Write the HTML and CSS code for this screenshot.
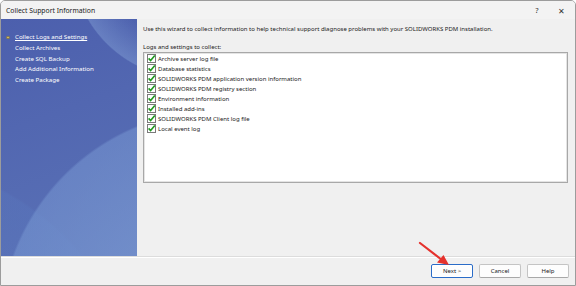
FILE: index.html
```html
<!DOCTYPE html>
<html>
<head>
<meta charset="utf-8">
<link rel="stylesheet" href="styles.css">
</head>
<body>
<div class="window">
  <div class="titlebar">
    <span class="title">Collect Support Information</span>
    <div class="title-buttons">
      <span class="tb-btn">?</span>
      <span class="tb-btn close">✕</span>
    </div>
  </div>
  <div class="main">
    <div class="sidebar">
      <ul class="steps">
        <li class="step current"><span class="bullet"></span><span class="step-text">Collect Logs and Settings</span></li>
        <li class="step"><span class="step-text">Collect Archives</span></li>
        <li class="step"><span class="step-text">Create SQL Backup</span></li>
        <li class="step"><span class="step-text">Add Additional Information</span></li>
        <li class="step"><span class="step-text">Create Package</span></li>
      </ul>
    </div>
    <div class="content">
      <p class="intro">Use this wizard to collect information to help technical support diagnose problems with your SOLIDWORKS PDM installation.</p>
      <p class="label">Logs and settings to collect:</p>
      <div class="listbox">
        <div class="item"><svg class="cb" viewBox="0 0 9 9"><rect x="0.5" y="0.5" width="8" height="8" fill="#fff" stroke="#7a7a7a"/><path d="M1.6 4.4 L3.6 6.6 L7.8 1.6" fill="none" stroke="#1e9a1e" stroke-width="1.6"/></svg><span>Archive server log file</span></div>
        <div class="item"><svg class="cb" viewBox="0 0 9 9"><rect x="0.5" y="0.5" width="8" height="8" fill="#fff" stroke="#7a7a7a"/><path d="M1.6 4.4 L3.6 6.6 L7.8 1.6" fill="none" stroke="#1e9a1e" stroke-width="1.6"/></svg><span>Database statistics</span></div>
        <div class="item"><svg class="cb" viewBox="0 0 9 9"><rect x="0.5" y="0.5" width="8" height="8" fill="#fff" stroke="#7a7a7a"/><path d="M1.6 4.4 L3.6 6.6 L7.8 1.6" fill="none" stroke="#1e9a1e" stroke-width="1.6"/></svg><span>SOLIDWORKS PDM application version information</span></div>
        <div class="item"><svg class="cb" viewBox="0 0 9 9"><rect x="0.5" y="0.5" width="8" height="8" fill="#fff" stroke="#7a7a7a"/><path d="M1.6 4.4 L3.6 6.6 L7.8 1.6" fill="none" stroke="#1e9a1e" stroke-width="1.6"/></svg><span>SOLIDWORKS PDM registry section</span></div>
        <div class="item"><svg class="cb" viewBox="0 0 9 9"><rect x="0.5" y="0.5" width="8" height="8" fill="#fff" stroke="#7a7a7a"/><path d="M1.6 4.4 L3.6 6.6 L7.8 1.6" fill="none" stroke="#1e9a1e" stroke-width="1.6"/></svg><span>Environment information</span></div>
        <div class="item"><svg class="cb" viewBox="0 0 9 9"><rect x="0.5" y="0.5" width="8" height="8" fill="#fff" stroke="#7a7a7a"/><path d="M1.6 4.4 L3.6 6.6 L7.8 1.6" fill="none" stroke="#1e9a1e" stroke-width="1.6"/></svg><span>Installed add-ins</span></div>
        <div class="item"><svg class="cb" viewBox="0 0 9 9"><rect x="0.5" y="0.5" width="8" height="8" fill="#fff" stroke="#7a7a7a"/><path d="M1.6 4.4 L3.6 6.6 L7.8 1.6" fill="none" stroke="#1e9a1e" stroke-width="1.6"/></svg><span>SOLIDWORKS PDM Client log file</span></div>
        <div class="item"><svg class="cb" viewBox="0 0 9 9"><rect x="0.5" y="0.5" width="8" height="8" fill="#fff" stroke="#7a7a7a"/><path d="M1.6 4.4 L3.6 6.6 L7.8 1.6" fill="none" stroke="#1e9a1e" stroke-width="1.6"/></svg><span>Local event log</span></div>
      </div>
    </div>
  </div>
  <div class="footer">
    <button class="btn default">Next &gt;</button>
    <button class="btn">Cancel</button>
    <button class="btn">Help</button>
  </div>
  <svg class="arrow" viewBox="0 0 40 30" width="40" height="30">
    <line x1="2" y1="2" x2="24" y2="19" stroke="#e5322d" stroke-width="2.2" stroke-linecap="round"/>
    <polygon points="31,24 19,21.5 25.5,14" fill="#e5322d"/>
  </svg>
</div>
</body>
</html>
```

FILE: styles.css
```css
* { box-sizing: border-box; }
html, body { margin: 0; padding: 0; }
body {
  width: 576px;
  height: 286px;
  background: #fff;
  font-family: "Noto Sans", "Open Sans", sans-serif;
  color: #1a1a1a;
  overflow: hidden;
}
.window {
  position: relative;
  width: 576px;
  height: 286px;
  border: 1px solid #9c9c9c;
  border-radius: 5px 5px 0 0;
  background: #f0f0f0;
  display: flex;
  flex-direction: column;
  overflow: hidden;
}
.titlebar {
  height: 18px;
  flex: 0 0 18px;
  display: flex;
  align-items: center;
  justify-content: space-between;
  padding: 0 0 0 5px;
  background: #f3f3f3;
}
.title {
  font-size: 6.8px;
  color: #1a1a1a;
}
.title-buttons {
  display: flex;
  align-items: center;
  height: 100%;
}
.tb-btn {
  width: 24px;
  text-align: center;
  font-size: 7.5px;
  color: #333;
}
.tb-btn.close { font-size: 8px; margin-right: 2px; }
.main {
  flex: 0 0 237px;
  display: flex;
}
.sidebar {
  width: 136px;
  flex: 0 0 136px;
  background:
    radial-gradient(circle 222px at 220px 312px, rgba(140,172,222,0.6) 0, rgba(122,154,212,0.5) 99%, transparent 100%),
    radial-gradient(circle 120px at 190px -60px, rgba(140,170,220,0) 0, rgba(140,170,220,0) 70%, rgba(140,170,220,0.4) 99%, transparent 100%),
    radial-gradient(circle 260px at -120px 400px, rgba(90,120,190,0) 0, rgba(90,120,190,0.35) 99%, transparent 100%),
    linear-gradient(160deg, #4c5fad 0%, #5267b1 40%, #5a72b6 100%);
  padding-top: 13px;
}
.steps {
  list-style: none;
  margin: 0;
  padding: 0;
}
.step {
  position: relative;
  height: 10.75px;
  line-height: 10.75px;
  padding-left: 14px;
  font-size: 6.15px;
  color: #ffffff;
}
.step.current .step-text { text-decoration: underline; }
.bullet {
  position: absolute;
  left: 5px;
  top: 3.6px;
  width: 3.6px;
  height: 3.6px;
  border-radius: 50%;
  background: #c8b46a;
  border: 0.6px solid #8e7d3a;
}
.content {
  flex: 1;
  padding: 6px 7px 0 6px;
  font-size: 6px;
}
.intro {
  margin: 0;
  line-height: 9px;
}
.label {
  margin: 9px 0 0 0;
  line-height: 9px;
}
.listbox {
  margin-top: 0;
  height: 131px;
  background: #fff;
  border: 1px solid #a8a8a8;
  box-shadow: inset 0 0 0 1px #e4e4e4;
  padding: 0.5px 0 0 3px;
}
.item {
  display: flex;
  align-items: center;
  height: 10px;
  font-size: 6px;
}
.cb {
  width: 9px;
  height: 9px;
  margin-right: 2px;
  flex: 0 0 9px;
}
.footer {
  flex: 1;
  border-top: 1px solid #dcdcdc;
  box-shadow: inset 0 1px 0 #ffffff;
  display: flex;
  justify-content: flex-end;
  align-items: center;
  gap: 6px;
  padding: 0 6px 1px 0;
}
.btn {
  width: 42px;
  height: 14px;
  padding: 0;
  font-family: "Noto Sans", "Open Sans", sans-serif;
  font-size: 6px;
  color: #1a1a1a;
  background: #fdfdfd;
  border: 1px solid #c4c4c4;
  border-bottom-color: #a8a8a8;
  border-radius: 2px;
}
.btn.default {
  border: 1px solid #2a6cc8;
  box-shadow: inset 0 0 0 1px #ffffff;
}
.arrow {
  position: absolute;
  left: 417px;
  top: 240px;
}
```
